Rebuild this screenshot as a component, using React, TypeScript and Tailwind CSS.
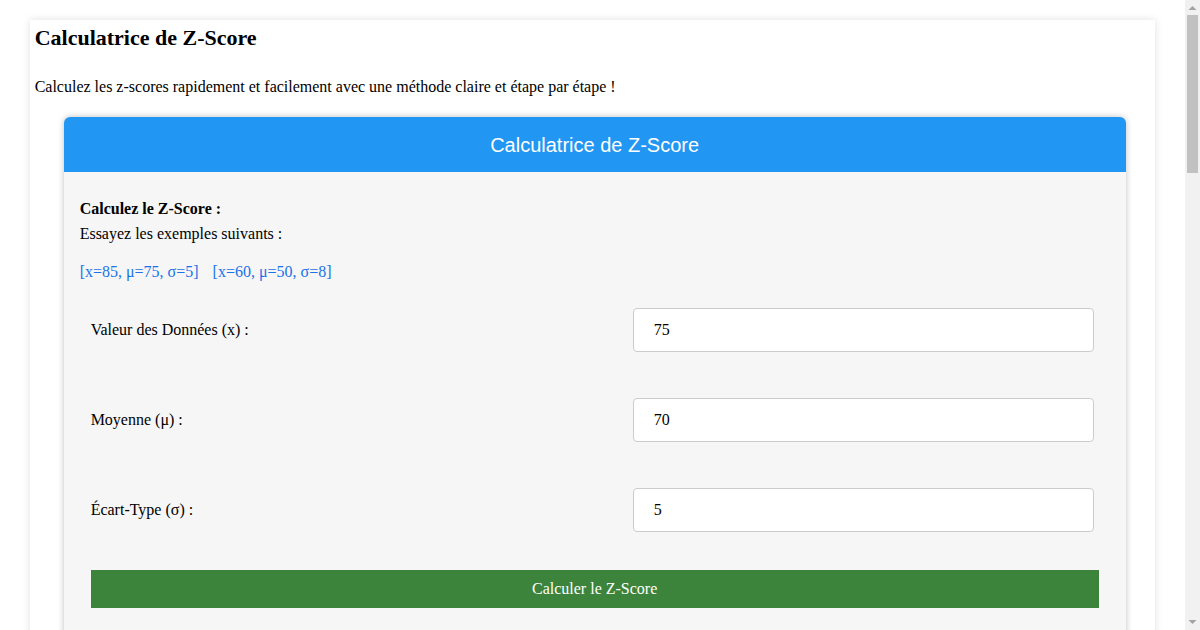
import { useState } from 'react'

const examples = [
  { label: '[x=85, μ=75, σ=5]', x: '85', mu: '75', sigma: '5' },
  { label: '[x=60, μ=50, σ=8]', x: '60', mu: '50', sigma: '8' },
]

const ScrollBar = () => (
  <div className="flex w-[15px] shrink-0 flex-col items-center bg-[#f1f1f1]">
    <svg width="15" height="15" viewBox="0 0 15 15" className="shrink-0">
      <path d="M3.5 10 L7.5 6 L11.5 10 Z" fill="#a3a3a3" />
    </svg>
    <div className="h-[158px] w-[11px] bg-[#c1c1c1]" />
    <div className="flex-1" />
    <svg width="15" height="15" viewBox="0 0 15 15" className="shrink-0">
      <path d="M3.5 5 L7.5 9 L11.5 5 Z" fill="#a3a3a3" />
    </svg>
  </div>
)

const App = () => {
  const [x, setX] = useState('75')
  const [mu, setMu] = useState('70')
  const [sigma, setSigma] = useState('5')
  const [result, setResult] = useState<string | null>(null)

  const fields = [
    { id: 'x', label: 'Valeur des Données (x) :', value: x, set: setX },
    { id: 'mu', label: 'Moyenne (μ) :', value: mu, set: setMu },
    { id: 'sigma', label: 'Écart-Type (σ) :', value: sigma, set: setSigma },
  ]

  const calculate = () => {
    const z = (parseFloat(x) - parseFloat(mu)) / parseFloat(sigma)
    setResult(Number.isFinite(z) ? z.toFixed(4) : null)
  }

  return (
    <div className="flex h-[630px] overflow-hidden bg-white font-['Liberation_Serif',serif] text-[16px] text-black">
      <div className="min-w-0 flex-1 pt-5">
        <div className="mx-auto w-[95%] bg-white p-[5px] pb-10 shadow-[0_0_8px_rgba(0,0,0,0.12)]">
          <h2 className="mb-[28px] text-[22px] leading-[25px] font-bold">
            Calculatrice de Z-Score
          </h2>
          <p className="leading-[18px]">
            Calculez les z-scores rapidement et facilement avec une méthode claire et étape par étape !
          </p>

          <div className="mt-[21px] ml-[29px] w-[1062px] rounded-t-[6px] bg-[#f6f6f6] shadow-[0_0_6px_rgba(0,0,0,0.25)]">
            <div className="flex h-[55px] items-center justify-center rounded-t-[6px] bg-[#2196f3] font-['Liberation_Sans',Arial,sans-serif] text-[20px] text-white">
              Calculatrice de Z-Score
            </div>

            <div className="px-4 pt-[24px] pb-8">
              <p className="leading-[25px] font-bold">Calculez le Z-Score :</p>
              <p className="leading-[25px]">Essayez les exemples suivants :</p>
              <div className="mt-[13px] flex gap-[14px] leading-[25px] text-[#1a73e8]">
                {examples.map((ex) => (
                  <button
                    key={ex.label}
                    type="button"
                    className="cursor-pointer"
                    onClick={() => {
                      setX(ex.x)
                      setMu(ex.mu)
                      setSigma(ex.sigma)
                    }}
                  >
                    {ex.label}
                  </button>
                ))}
              </div>

              <div className="mt-[24px] flex flex-col gap-[46px]">
                {fields.map((f) => (
                  <div key={f.id} className="flex items-center pl-[11px] pr-4">
                    <label htmlFor={f.id} className="flex-1">
                      {f.label}
                    </label>
                    <input
                      id={f.id}
                      type="text"
                      value={f.value}
                      onChange={(e) => f.set(e.target.value)}
                      className="h-[44px] w-[461px] rounded-[4px] border border-[#cccccc] bg-white px-5 text-[16px] outline-none"
                    />
                  </div>
                ))}
              </div>

              <button
                type="button"
                onClick={calculate}
                className="mx-[11px] mt-[38px] h-[38px] w-[1008px] cursor-pointer bg-[#3c843b] text-white"
              >
                Calculer le Z-Score
              </button>

              {result !== null && (
                <p className="mt-4 px-[11px]">Z-Score : {result}</p>
              )}
            </div>
          </div>
        </div>
      </div>
      <ScrollBar />
    </div>
  )
}

export default App
